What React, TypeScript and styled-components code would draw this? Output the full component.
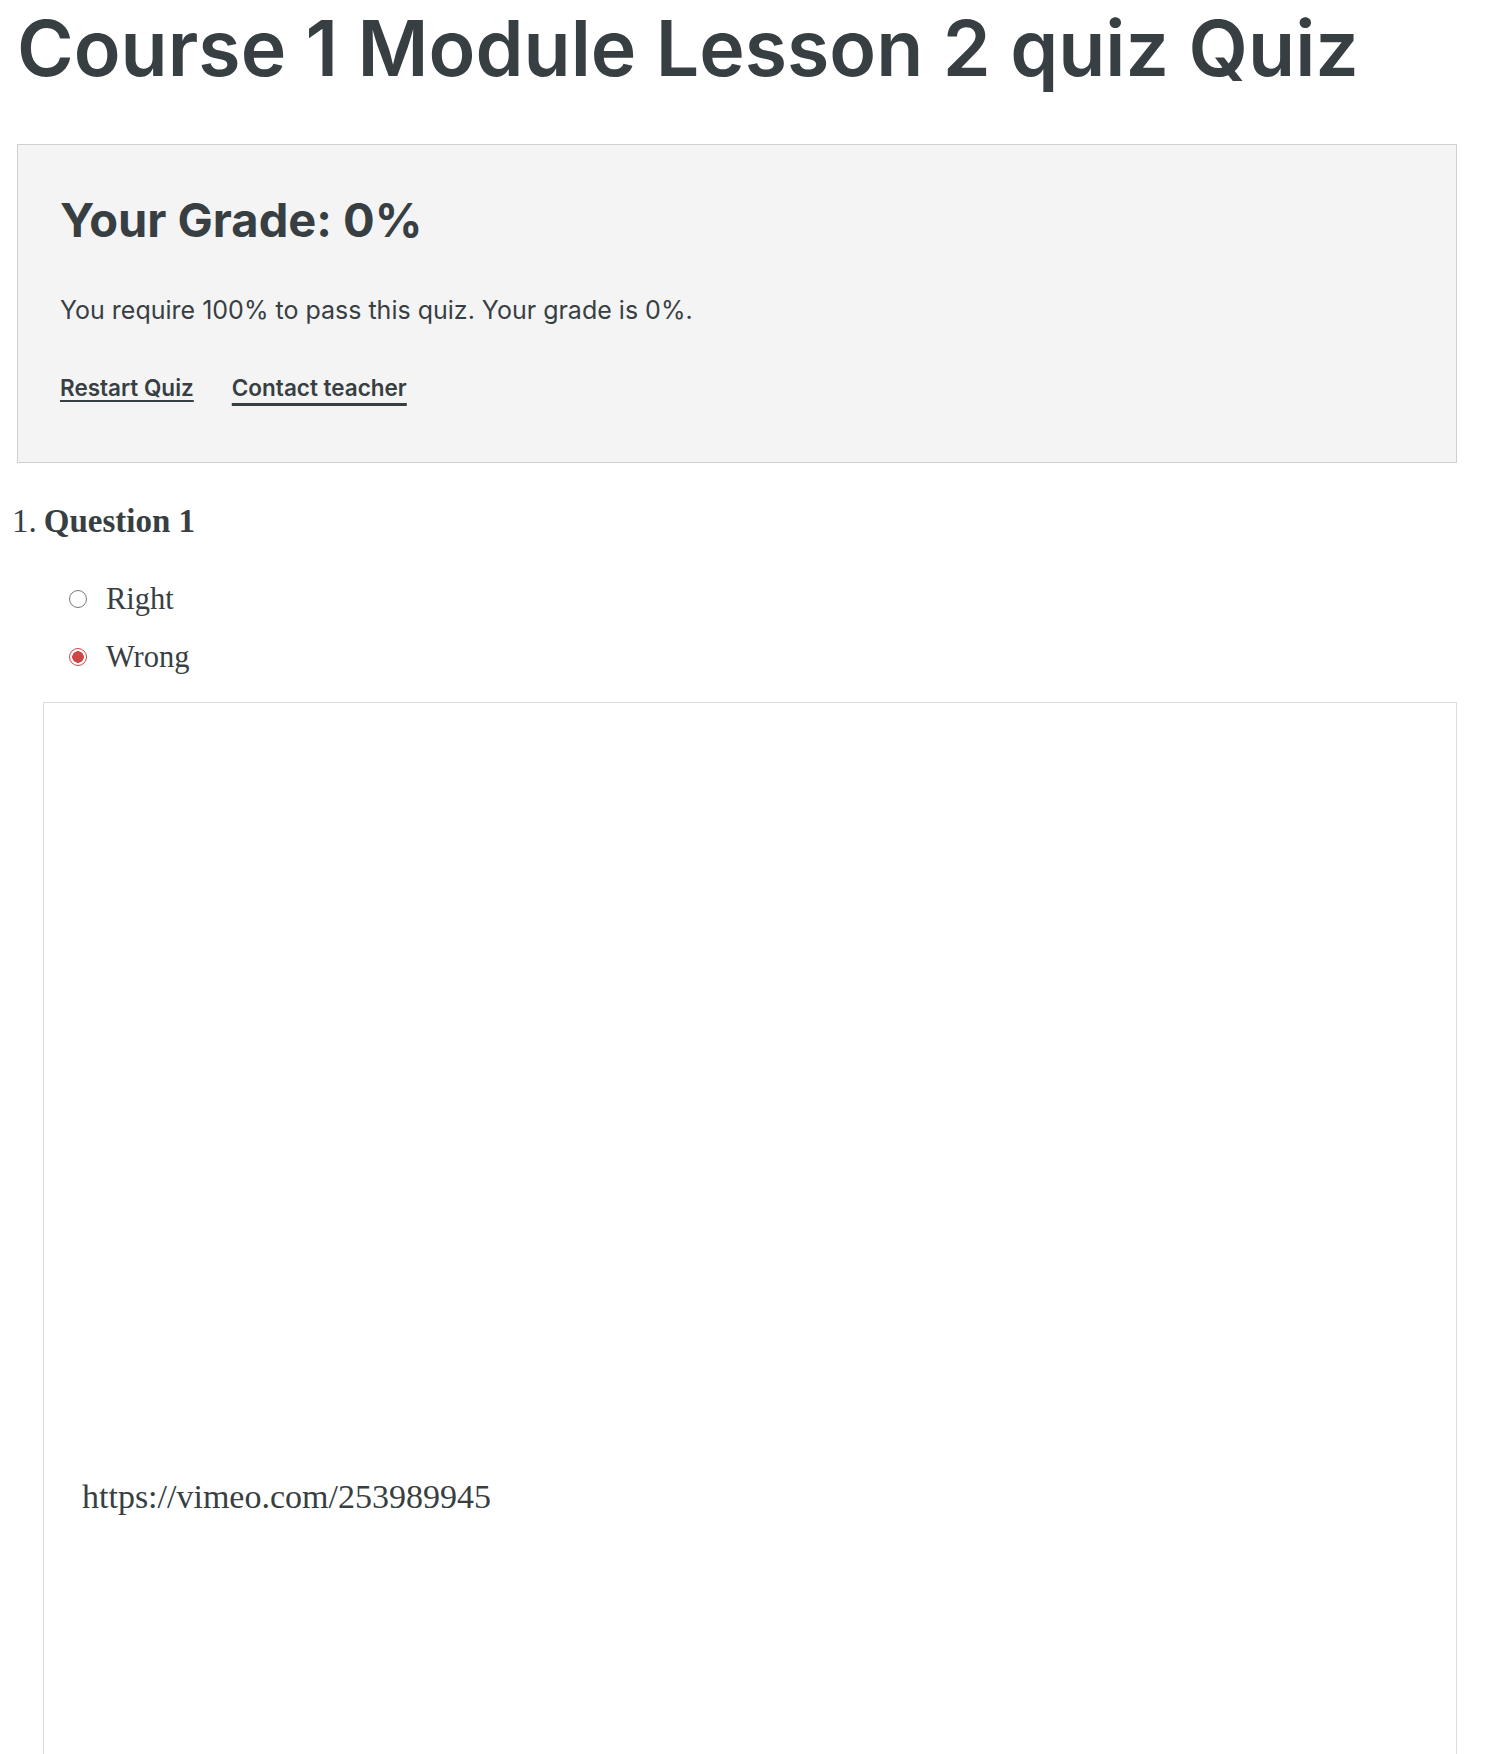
import styled, { createGlobalStyle } from "styled-components";

const GlobalStyle = createGlobalStyle`
  html, body {
    margin: 0;
    padding: 0;
    background: #ffffff;
  }
  body {
    color: #383f43;
    font-family: Inter, "Liberation Sans", sans-serif;
  }
`;

const options = [
  { label: "Right", checked: false },
  { label: "Wrong", checked: true },
];

function App() {
  return (
    <>
      <GlobalStyle />
      <Page>
        <Title>Course 1 Module Lesson 2 quiz Quiz</Title>
        <GradeBox>
          <GradeHeading>Your Grade: 0%</GradeHeading>
          <GradeText>You require 100% to pass this quiz. Your grade is 0%.</GradeText>
          <Actions>
            <ActionLink href="#">Restart Quiz</ActionLink>
            <ActionLink href="#" $thick>
              Contact teacher
            </ActionLink>
          </Actions>
        </GradeBox>
        <Questions>
          <QuestionItem>
            <QuestionTitle>
              <Number>1.</Number>
              <strong>Question 1</strong>
            </QuestionTitle>
            <Answers>
              {options.map((o) => (
                <Answer key={o.label}>
                  <Radio $checked={o.checked} />
                  <AnswerLabel>{o.label}</AnswerLabel>
                </Answer>
              ))}
            </Answers>
            <Embed>
              <EmbedUrl>https://vimeo.com/253989945</EmbedUrl>
            </Embed>
          </QuestionItem>
        </Questions>
      </Page>
    </>
  );
}

const Page = styled.div`
  width: 1440px;
  margin-left: 17px;
`;

const Title = styled.h1`
  margin: 2px 0 0;
  font-size: 77px;
  line-height: 1.2;
  font-weight: 600;
`;

const GradeBox = styled.div`
  margin-top: 50px;
  background: #f4f4f4;
  border: 1px solid #d0d0d0;
  padding: 47px 42px 57px;
`;

const GradeHeading = styled.h2`
  margin: 0;
  font-size: 47px;
  line-height: 1.2;
  font-weight: 700;
`;

const GradeText = styled.p`
  margin: 43px 0 0;
  font-size: 25px;
  line-height: 1.5;
`;

const Actions = styled.div`
  display: flex;
  gap: 38px;
  margin-top: 42px;
`;

const ActionLink = styled.a<{ $thick?: boolean }>`
  color: #383f43;
  font-size: 22.5px;
  line-height: 1.5;
  font-weight: 600;
  text-decoration: underline;
  text-decoration-thickness: ${(p) => (p.$thick ? "3px" : "2px")};
  text-underline-offset: ${(p) => (p.$thick ? "7px" : "4px")};
`;

const Questions = styled.ol`
  list-style: none;
  margin: 37px 0 0;
  padding: 0;
`;

const QuestionItem = styled.li`
  font-family: "Liberation Serif", serif;
`;

const QuestionTitle = styled.h3`
  display: flex;
  gap: 7px;
  margin: 0 0 0 -5px;
  font-size: 33px;
  line-height: 1.3;
  font-weight: 400;
  strong {
    font-weight: 700;
  }
`;

const Number = styled.span`
  font-weight: 400;
`;

const Answers = styled.ul`
  list-style: none;
  margin: 27px 0 16px;
  padding: 0 0 0 52px;
`;

const Answer = styled.li`
  display: flex;
  align-items: center;
  height: 58px;
  gap: 19px;
`;

const Radio = styled.span<{ $checked: boolean }>`
  box-sizing: border-box;
  width: 18px;
  height: 18px;
  border-radius: 50%;
  border: 1.5px solid ${(p) => (p.$checked ? "#d04646" : "#7a7a7a")};
  background: ${(p) => (p.$checked ? "radial-gradient(circle, #d04646 0 5.5px, #fff 6px)" : "#fff")};
`;

const AnswerLabel = styled.span`
  font-size: 30.5px;
  line-height: 58px;
`;

const Embed = styled.div`
  margin-left: 26px;
  min-height: 1200px;
  border: 1px solid #dcdcdc;
  padding: 768px 38px 0;
`;

const EmbedUrl = styled.div`
  font-size: 34px;
  line-height: 1.5;
`;

export default App;
